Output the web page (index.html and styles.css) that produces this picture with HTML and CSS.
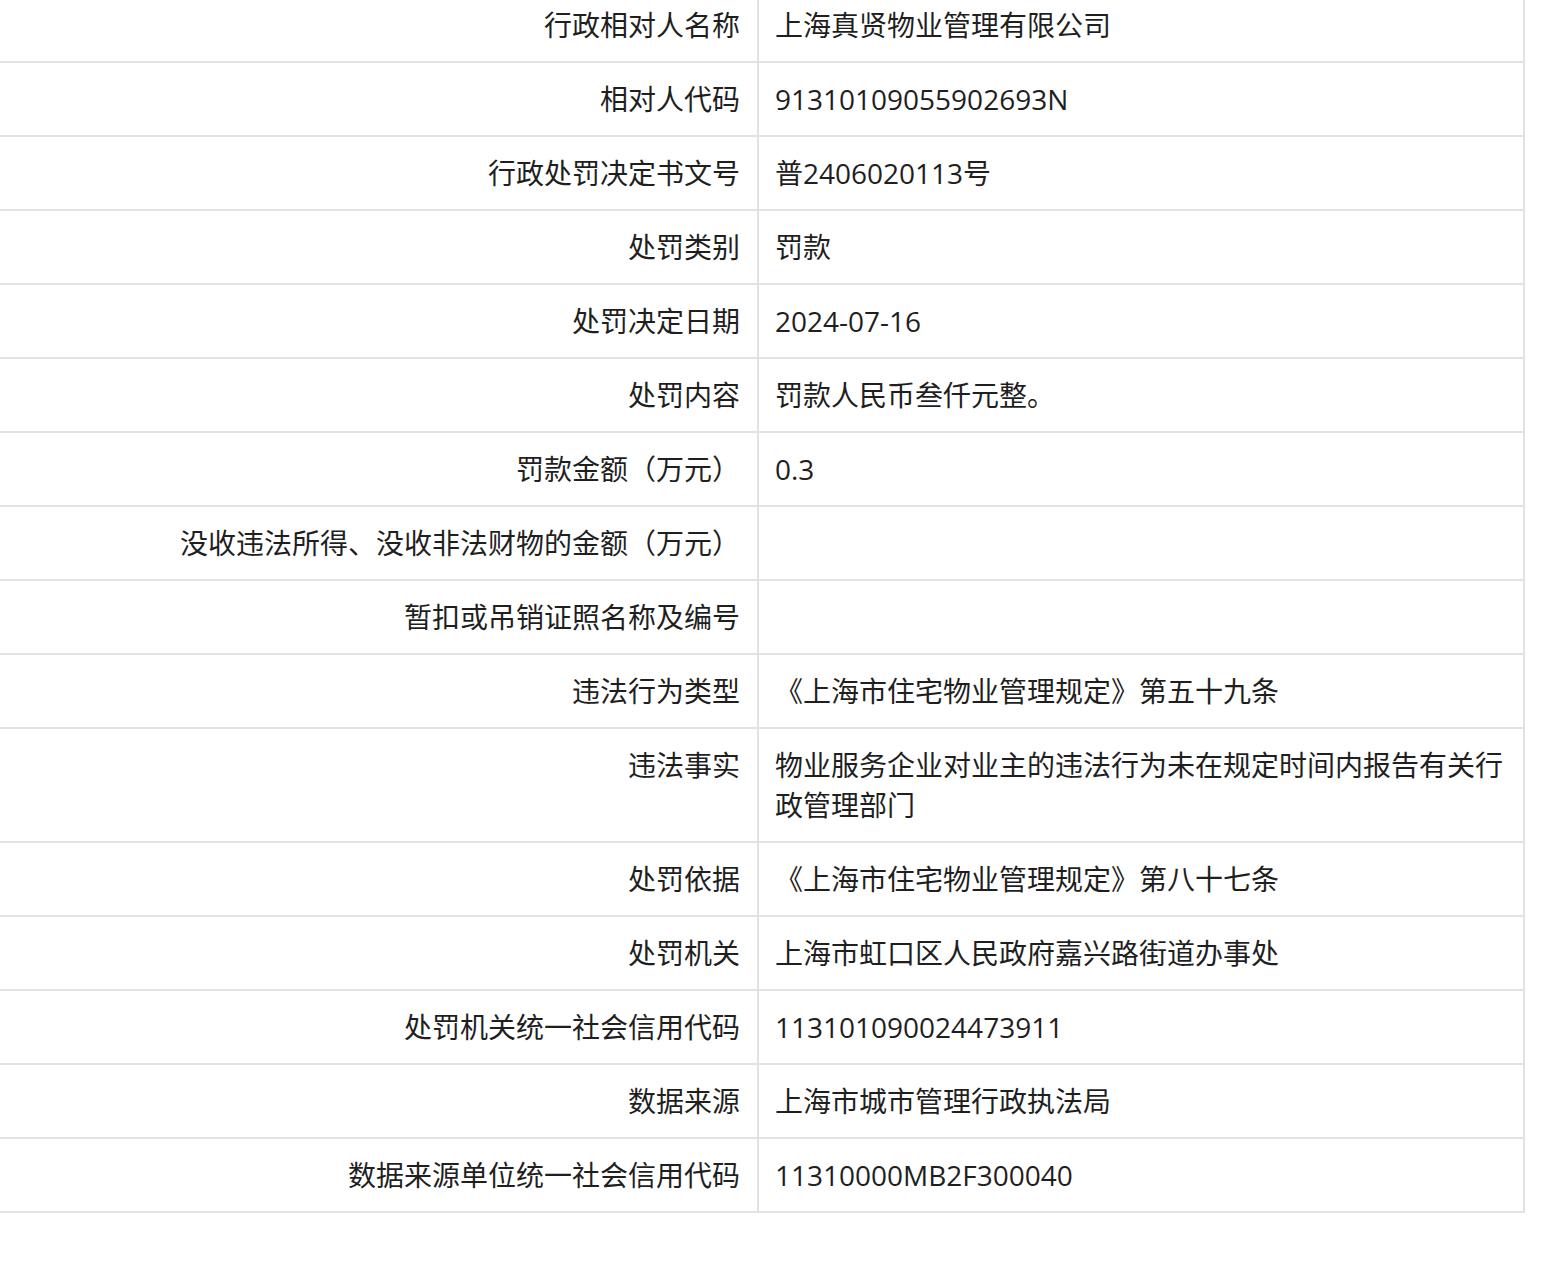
FILE: index.html
```html
<!DOCTYPE html>
<html lang="zh-CN">
<head>
<meta charset="utf-8">
<title>行政处罚信息</title>
<link rel="stylesheet" href="styles.css">
</head>
<body>
<div class="wrap">
<table class="info">
<colgroup><col class="c-label"><col class="c-value"></colgroup>
<tbody>
<tr><th>行政相对人名称</th><td>上海真贤物业管理有限公司</td></tr>
<tr><th>相对人代码</th><td>91310109055902693N</td></tr>
<tr><th>行政处罚决定书文号</th><td>普2406020113号</td></tr>
<tr><th>处罚类别</th><td>罚款</td></tr>
<tr><th>处罚决定日期</th><td>2024-07-16</td></tr>
<tr><th>处罚内容</th><td>罚款人民币叁仟元整。</td></tr>
<tr><th>罚款金额（万元）</th><td>0.3</td></tr>
<tr><th>没收违法所得、没收非法财物的金额（万元）</th><td></td></tr>
<tr><th>暂扣或吊销证照名称及编号</th><td></td></tr>
<tr><th>违法行为类型</th><td>《上海市住宅物业管理规定》第五十九条</td></tr>
<tr><th>违法事实</th><td>物业服务企业对业主的违法行为未在规定时间内报告有关行政管理部门</td></tr>
<tr><th>处罚依据</th><td>《上海市住宅物业管理规定》第八十七条</td></tr>
<tr><th>处罚机关</th><td>上海市虹口区人民政府嘉兴路街道办事处</td></tr>
<tr><th>处罚机关统一社会信用代码</th><td>113101090024473911</td></tr>
<tr><th>数据来源</th><td>上海市城市管理行政执法局</td></tr>
<tr><th>数据来源单位统一社会信用代码</th><td>11310000MB2F300040</td></tr>
</tbody>
</table>
</div>
</body>
</html>
```
FILE: styles.css
```css
html, body {
  margin: 0;
  padding: 0;
  background: #ffffff;
}
body {
  font-family: "Open Sans", "Noto Sans CJK SC", sans-serif;
  color: #1f1f1f;
  overflow: hidden;
}
.wrap {
  margin-top: -13px;
  margin-left: -20px;
}
.info {
  border-collapse: collapse;
  width: 1544px;
  table-layout: fixed;
}
.c-label { width: 778px; }
.c-value { width: 766px; }
.info th,
.info td {
  border: 2px solid #e2e2e2;
  font-size: 28px;
  line-height: 40px;
  padding: 16px 17px 16px 16px;
  vertical-align: top;
  font-weight: 400;
}
.info th {
  text-align: right;
  border-left: none;
}
.info td {
  text-align: left;
}
```
